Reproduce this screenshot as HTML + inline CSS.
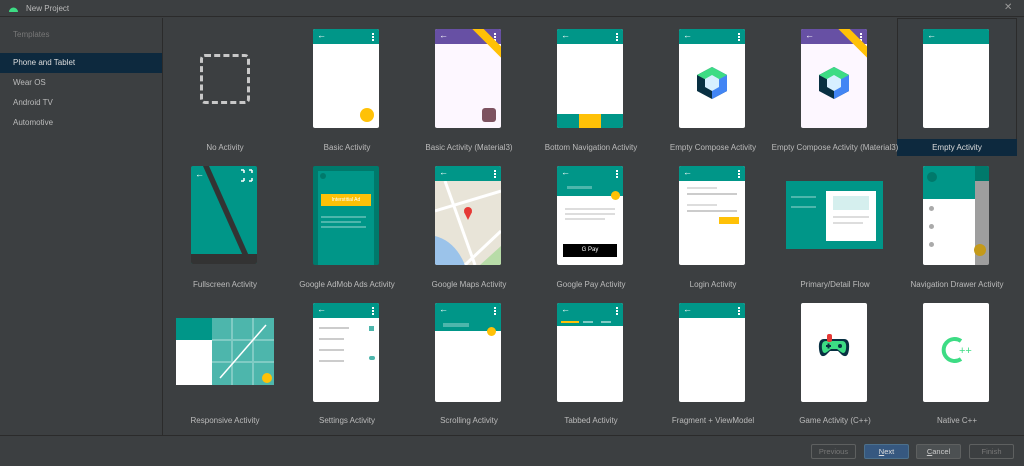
<!DOCTYPE html><html><head><style>
*{margin:0;padding:0;box-sizing:border-box}
body{width:1024px;height:466px;background:#3c3f41;font-family:"Liberation Sans",sans-serif;color:#bbb;position:relative;overflow:hidden;font-size:8px}
.a{position:absolute}
.ph{position:absolute;width:66px;height:99px;background:#fff;border-radius:2px;overflow:hidden}
.bar{position:absolute;left:0;top:0;width:100%;height:15px;background:#009688}
.bar:before{content:"←";position:absolute;left:4px;top:1px;color:#fff;font-size:9px;font-weight:bold}
.d:after{content:"";position:absolute;right:5px;top:4px;width:2px;height:2px;background:#fff;box-shadow:0 3px 0 #fff,0 6px 0 #fff}
.lbl{position:absolute;width:122px;text-align:center;font-size:8px;color:#bbb}
.side div{height:20px;line-height:20px;padding-left:13px;font-size:8px;color:#bbb}
.btn{position:absolute;top:444px;height:15px;border:1px solid #5e6060;border-radius:2px;font-size:7.5px;text-align:center;line-height:13px;color:#777;width:45px}
.ln{position:absolute;height:2px;background:#ddd}
</style></head><body>
<div class="a" style="left:0;top:0;width:1024px;height:17px;background:#3c3f41;border-bottom:1px solid #2b2b2b"></div>
<svg class="a" style="left:8px;top:5px" width="11" height="7"><path d="M1 7 A4.5 4.5 0 0 1 10 7Z" fill="#3ddc84"/></svg>
<div class="a" style="left:26px;top:4px;font-size:8px;color:#bbb">New Project</div>
<div class="a" style="left:1004px;top:2px;font-size:10px;color:#999">✕</div>
<div class="a side" style="left:0;top:18px;width:163px;height:417px;border-right:1px solid #2b2b2b">
<div style="color:#777;margin-top:7px">Templates</div>
<div style="background:#0d293e;color:#ddd;margin-top:8px">Phone and Tablet</div>
<div>Wear OS</div><div>Android TV</div><div>Automotive</div>
</div>
<div class="a" style="left:0;top:435px;width:1024px;height:1px;background:#2b2b2b"></div>
<div class="a" style="left:897px;top:18px;width:120px;height:138px;background:#3b3f42;border:1px solid #2b2b2b"></div>
<div class="a" style="left:897px;top:139px;width:120px;height:17px;background:#0d293e"></div>

<div class="a" style="left:200px;top:54px;width:50px;height:50px;border:3px dashed #c8c8c8;border-radius:5px"></div>
<div class="ph" style="left:313px;top:29px"><div class="bar d"></div><div class="a" style="right:5px;bottom:6px;width:14px;height:14px;border-radius:50%;background:#ffc107"></div></div>
<div class="ph" style="left:435px;top:29px;background:#fdf7ff"><div class="bar d" style="background:#6750a4"></div><div class="a" style="right:-12px;top:6px;width:50px;height:8px;background:#ffc107;transform:rotate(45deg)"></div><div class="a" style="right:5px;bottom:6px;width:14px;height:14px;border-radius:3px;background:#7d5260"></div></div>
<div class="ph" style="left:557px;top:29px"><div class="bar d"></div><div class="a" style="left:0;bottom:0;width:66px;height:14px;background:#009688"></div><div class="a" style="left:22px;bottom:0;width:22px;height:14px;background:#ffc107"></div></div>
<div class="ph" style="left:679px;top:29px"><div class="bar d"></div><svg class="a" style="left:17px;top:37px" width="32" height="34"><path d="M16 1 L31 9 L31 25 L16 33 L1 25 L1 9Z" fill="#083042"/><path d="M16 1 L31 9 L31 25 L16 33Z" fill="#4285f4"/><path d="M16 1 L31 9 L16 17 L1 9Z" fill="#3ddc84"/><path d="M16 9 L23 13 L23 21 L16 25 L9 21 L9 13Z" fill="#d7efff"/></svg></div>
<div class="ph" style="left:801px;top:29px;background:#fdf7ff"><div class="bar d" style="background:#6750a4"></div><div class="a" style="right:-12px;top:6px;width:50px;height:8px;background:#ffc107;transform:rotate(45deg)"></div><svg class="a" style="left:17px;top:37px" width="32" height="34"><path d="M16 1 L31 9 L31 25 L16 33 L1 25 L1 9Z" fill="#083042"/><path d="M16 1 L31 9 L31 25 L16 33Z" fill="#4285f4"/><path d="M16 1 L31 9 L16 17 L1 9Z" fill="#3ddc84"/><path d="M16 9 L23 13 L23 21 L16 25 L9 21 L9 13Z" fill="#d7efff"/></svg></div>
<div class="ph" style="left:923px;top:29px"><div class="bar"></div></div>
<div class="lbl" style="left:164px;top:143px">No Activity</div>
<div class="lbl" style="left:286px;top:143px">Basic Activity</div>
<div class="lbl" style="left:408px;top:143px">Basic Activity (Material3)</div>
<div class="lbl" style="left:530px;top:143px">Bottom Navigation Activity</div>
<div class="lbl" style="left:652px;top:143px">Empty Compose Activity</div>
<div class="lbl" style="left:770px;top:143px;width:130px">Empty Compose Activity (Material3)</div>
<div class="lbl" style="left:896px;top:143px;color:#ddd">Empty Activity</div>

<div class="ph" style="left:191px;top:166px;background:#009688;height:98px"><svg class="a" width="66" height="98"><path d="M18 0 L58 90 L52 90 L12 0Z" fill="#333"/><rect x="0" y="88" width="66" height="10" fill="#333"/><path d="M53 4 h-3 M53 4 v3 M58 4 h3 M61 4 v3 M53 15 v-3 M53 15 h-3 M61 15 v-3 M61 15 h-3" stroke="#fff" stroke-width="1.5"/><text x="4" y="11" fill="#fff" font-size="9">←</text></svg></div>
<div class="ph" style="left:313px;top:166px;background:#00796b"><div class="a" style="left:5px;top:5px;width:56px;height:94px;background:#009688"></div><div class="a" style="left:8px;top:28px;width:50px;height:12px;background:#ffc107;color:#fff;font-size:5px;text-align:center;line-height:12px">Interstitial Ad</div><div class="a" style="left:7px;top:7px;width:6px;height:6px;border-radius:50%;background:#00796b"></div><div class="ln" style="left:8px;top:50px;width:45px;background:#4db6ac"></div><div class="ln" style="left:8px;top:55px;width:40px;background:#4db6ac"></div><div class="ln" style="left:8px;top:60px;width:45px;background:#4db6ac"></div></div>
<div class="ph" style="left:435px;top:166px;background:#e8e4d8"><div class="bar d"></div><svg class="a" style="top:15px" width="66" height="84"><path d="M0 55 Q20 60 30 84 L0 84Z" fill="#9bc3ea"/><path d="M0 30 L66 10 M10 0 L40 84 M30 84 L66 50" stroke="#fff" stroke-width="3"/><path d="M45 84 L66 65 L66 84Z" fill="#b8dca8"/><circle cx="33" cy="30" r="4" fill="#e53935"/><path d="M29 31 L33 39 L37 31Z" fill="#e53935"/></svg></div>
<div class="ph" style="left:557px;top:166px"><div class="bar d" style="height:30px"></div><div class="a" style="left:10px;top:20px;width:25px;height:3px;background:#4db6ac"></div><div class="a" style="right:3px;top:25px;width:9px;height:9px;border-radius:50%;background:#ffc107"></div><div class="ln" style="left:8px;top:42px;width:50px"></div><div class="ln" style="left:8px;top:47px;width:50px"></div><div class="ln" style="left:8px;top:52px;width:40px"></div><div class="a" style="left:6px;top:78px;width:54px;height:13px;background:#000;color:#fff;font-size:6px;text-align:center;line-height:13px">G Pay</div></div>
<div class="ph" style="left:679px;top:166px"><div class="bar d"></div><div class="ln" style="left:8px;top:21px;width:30px"></div><div class="ln" style="left:8px;top:27px;width:50px;background:#ccc"></div><div class="ln" style="left:8px;top:38px;width:30px"></div><div class="ln" style="left:8px;top:44px;width:50px;background:#ccc"></div><div class="a" style="left:40px;top:51px;width:20px;height:7px;background:#ffc107"></div></div>
<div class="a" style="left:786px;top:181px;width:97px;height:68px;background:#009688"><div class="a" style="left:40px;top:10px;width:50px;height:50px;background:#fff"></div><div class="a" style="left:47px;top:15px;width:36px;height:14px;background:#d5efee"></div><div class="ln" style="left:47px;top:35px;width:36px"></div><div class="ln" style="left:47px;top:41px;width:30px"></div><div class="ln" style="left:5px;top:15px;width:25px;background:#4db6ac"></div><div class="ln" style="left:5px;top:25px;width:25px;background:#4db6ac"></div></div>
<div class="ph" style="left:923px;top:166px;background:#9e9e9e"><div class="a" style="left:0;top:0;width:52px;height:99px;background:#fff"></div><div class="a" style="left:0;top:0;width:52px;height:33px;background:#009688"></div><div class="a" style="left:4px;top:6px;width:10px;height:10px;border-radius:50%;background:#00796b"></div><div class="a" style="left:52px;top:0;width:14px;height:15px;background:#00796b"></div><div class="a" style="left:6px;top:40px;width:5px;height:5px;border-radius:50%;background:#aaa"></div><div class="a" style="left:6px;top:58px;width:5px;height:5px;border-radius:50%;background:#aaa"></div><div class="a" style="left:6px;top:76px;width:5px;height:5px;border-radius:50%;background:#aaa"></div><div class="a" style="left:51px;top:78px;width:12px;height:12px;border-radius:50%;background:#c49a1a"></div></div>
<div class="lbl" style="left:164px;top:280px">Fullscreen Activity</div>
<div class="lbl" style="left:280px;top:280px;width:134px">Google AdMob Ads Activity</div>
<div class="lbl" style="left:408px;top:280px">Google Maps Activity</div>
<div class="lbl" style="left:530px;top:280px">Google Pay Activity</div>
<div class="lbl" style="left:652px;top:280px">Login Activity</div>
<div class="lbl" style="left:774px;top:280px">Primary/Detail Flow</div>
<div class="lbl" style="left:892px;top:280px;width:130px">Navigation Drawer Activity</div>

<div class="a" style="left:176px;top:318px;width:98px;height:67px;background:#fff"><div class="a" style="left:0;top:0;width:36px;height:22px;background:#009688"></div><div class="a" style="left:36px;top:0;width:62px;height:67px;background:#4db6ac"></div><svg class="a" style="left:36px;top:0" width="62" height="67"><path d="M20 0V67M41 0V67M0 22H62M0 44H62" stroke="#80cbc4" stroke-width="2"/><path d="M8 60 L54 7" stroke="#fff" stroke-width="1.5"/></svg><div class="a" style="left:86px;top:55px;width:10px;height:10px;border-radius:50%;background:#ffc107"></div></div>
<div class="ph" style="left:313px;top:303px"><div class="bar d"></div><div class="ln" style="left:6px;top:24px;width:30px;background:#ccc"></div><div class="ln" style="left:6px;top:35px;width:25px;background:#ccc"></div><div class="ln" style="left:6px;top:46px;width:25px;background:#ccc"></div><div class="ln" style="left:6px;top:57px;width:25px;background:#ccc"></div><div class="a" style="left:56px;top:23px;width:5px;height:5px;background:#4db6ac"></div><div class="a" style="left:56px;top:53px;width:6px;height:4px;border-radius:2px;background:#4db6ac"></div></div>
<div class="ph" style="left:435px;top:303px"><div class="bar d" style="height:28px"></div><div class="a" style="left:8px;top:20px;width:26px;height:4px;background:#4db6ac"></div><div class="a" style="right:5px;top:24px;width:9px;height:9px;border-radius:50%;background:#ffc107"></div></div>
<div class="ph" style="left:557px;top:303px"><div class="bar d" style="height:23px"></div><div class="a" style="left:4px;top:18px;width:18px;height:2px;background:#ffc107"></div><div class="a" style="left:26px;top:18px;width:10px;height:2px;background:#80cbc4"></div><div class="a" style="left:44px;top:18px;width:10px;height:2px;background:#80cbc4"></div></div>
<div class="ph" style="left:679px;top:303px"><div class="bar d"></div></div>
<div class="ph" style="left:801px;top:303px"><svg class="a" style="left:17px;top:34px" width="32" height="22"><path d="M6 2 H26 Q32 2 31 12 Q30 22 24 18 L20 14 H12 L8 18 Q2 22 1 12 Q0 2 6 2Z" fill="#083042"/><path d="M8 4 H24 Q29 4 28 12 Q27 18 23 15 L19 12 H13 L9 15 Q5 18 4 12 Q3 4 8 4Z" fill="#3ddc84"/><circle cx="22" cy="9" r="2" fill="#083042"/><path d="M8 9h5M10.5 6.5v5" stroke="#083042" stroke-width="2"/></svg><div class="a" style="left:26px;top:31px;width:5px;height:8px;background:#e53935;border-radius:2px"></div></div>
<div class="ph" style="left:923px;top:303px"><svg class="a" style="left:16px;top:30px" width="38" height="34"><path d="M22 8 A11 11 0 1 0 22 26" fill="none" stroke="#3ddc84" stroke-width="4"/><text x="20" y="21" font-size="11" fill="#3ddc84" font-family="Liberation Sans">++</text></svg></div>
<div class="lbl" style="left:164px;top:416px">Responsive Activity</div>
<div class="lbl" style="left:286px;top:416px">Settings Activity</div>
<div class="lbl" style="left:408px;top:416px">Scrolling Activity</div>
<div class="lbl" style="left:530px;top:416px">Tabbed Activity</div>
<div class="lbl" style="left:652px;top:416px">Fragment + ViewModel</div>
<div class="lbl" style="left:774px;top:416px">Game Activity (C++)</div>
<div class="lbl" style="left:896px;top:416px">Native C++</div>

<div class="btn" style="left:811px">Previous</div>
<div class="btn" style="left:864px;background:#365880;border-color:#4c708c;color:#ddd"><u>N</u>ext</div>
<div class="btn" style="left:916px;background:#4c5052;border-color:#5e6060;color:#ccc"><u>C</u>ancel</div>
<div class="btn" style="left:969px">Finish</div>
</body></html>
